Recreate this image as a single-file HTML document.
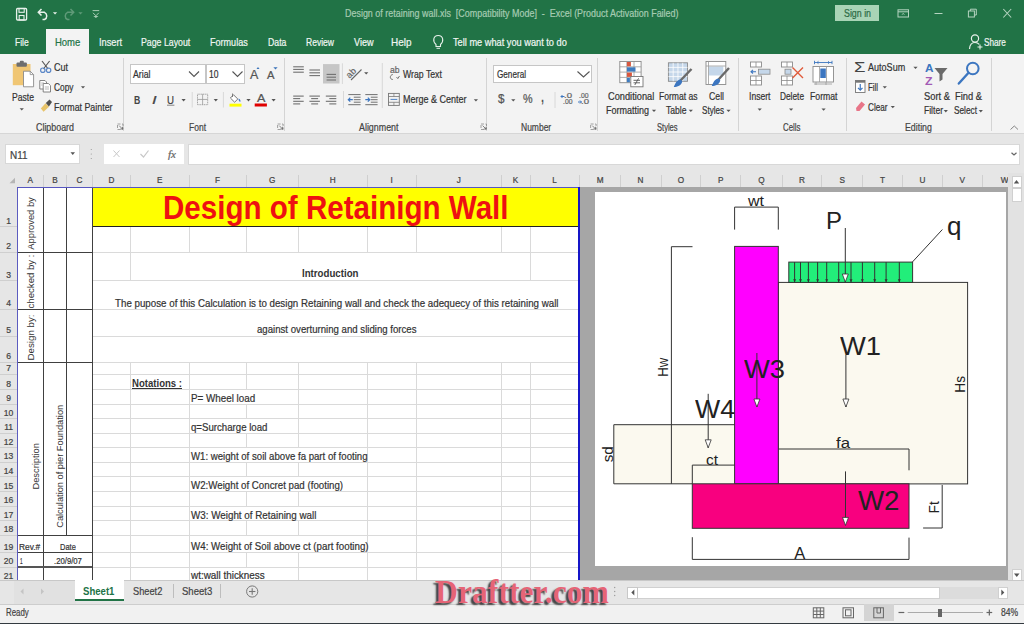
<!DOCTYPE html>
<html><head><meta charset="utf-8"><style>
html,body{margin:0;padding:0;}
body{width:1024px;height:624px;overflow:hidden;position:relative;background:#fff;font-family:"Liberation Sans",sans-serif;}
svg{position:absolute;overflow:visible;}
</style></head><body>
<div style="position:absolute;left:0.00px;top:0.00px;width:1024.00px;height:54.00px;background:#217346"></div>
<div style="position:absolute;left:45.70px;top:29.00px;width:43.50px;height:25.00px;background:#f3f3f3"></div>
<div style="position:absolute;left:344.50px;top:7.43px;font:normal normal 10.8px/12.064px 'Liberation Sans';color:#a6cbb2;white-space:pre;transform:scaleX(0.8283);transform-origin:0 0;-webkit-text-stroke:0.22px currentColor;">Design of retaining wall.xls  [Compatibility Mode]  -  Excel (Product Activation Failed)</div>
<div style="position:absolute;left:835.00px;top:5.00px;width:44.00px;height:16.00px;background:#a9d4b6"></div>
<div style="position:absolute;left:844.00px;top:6.83px;font:normal normal 10.8px/12.064px 'Liberation Sans';color:#2b6b45;white-space:pre;transform:scaleX(0.8179);transform-origin:0 0;-webkit-text-stroke:0.22px currentColor;">Sign in</div>
<div style="position:absolute;left:14.80px;top:35.83px;font:normal normal 10.8px/12.064px 'Liberation Sans';color:#f0f6f2;white-space:pre;transform:scaleX(0.7875);transform-origin:0 0;-webkit-text-stroke:0.22px currentColor;">File</div>
<div style="position:absolute;left:98.80px;top:35.83px;font:normal normal 10.8px/12.064px 'Liberation Sans';color:#f0f6f2;white-space:pre;transform:scaleX(0.8592);transform-origin:0 0;-webkit-text-stroke:0.22px currentColor;">Insert</div>
<div style="position:absolute;left:141.40px;top:35.83px;font:normal normal 10.8px/12.064px 'Liberation Sans';color:#f0f6f2;white-space:pre;transform:scaleX(0.8114);transform-origin:0 0;-webkit-text-stroke:0.22px currentColor;">Page Layout</div>
<div style="position:absolute;left:210.00px;top:35.83px;font:normal normal 10.8px/12.064px 'Liberation Sans';color:#f0f6f2;white-space:pre;transform:scaleX(0.8379);transform-origin:0 0;-webkit-text-stroke:0.22px currentColor;">Formulas</div>
<div style="position:absolute;left:267.60px;top:35.83px;font:normal normal 10.8px/12.064px 'Liberation Sans';color:#f0f6f2;white-space:pre;transform:scaleX(0.8068);transform-origin:0 0;-webkit-text-stroke:0.22px currentColor;">Data</div>
<div style="position:absolute;left:306.00px;top:35.83px;font:normal normal 10.8px/12.064px 'Liberation Sans';color:#f0f6f2;white-space:pre;transform:scaleX(0.7909);transform-origin:0 0;-webkit-text-stroke:0.22px currentColor;">Review</div>
<div style="position:absolute;left:353.50px;top:35.83px;font:normal normal 10.8px/12.064px 'Liberation Sans';color:#f0f6f2;white-space:pre;transform:scaleX(0.8403);transform-origin:0 0;-webkit-text-stroke:0.22px currentColor;">View</div>
<div style="position:absolute;left:390.60px;top:35.83px;font:normal normal 10.8px/12.064px 'Liberation Sans';color:#f0f6f2;white-space:pre;transform:scaleX(0.9187);transform-origin:0 0;-webkit-text-stroke:0.22px currentColor;">Help</div>
<div style="position:absolute;left:54.70px;top:35.83px;font:normal normal 10.8px/12.064px 'Liberation Sans';color:#217346;white-space:pre;transform:scaleX(0.8785);transform-origin:0 0;-webkit-text-stroke:0.22px currentColor;">Home</div>
<div style="position:absolute;left:452.80px;top:35.83px;font:normal normal 10.8px/12.064px 'Liberation Sans';color:#f0f6f2;white-space:pre;transform:scaleX(0.8542);transform-origin:0 0;-webkit-text-stroke:0.22px currentColor;">Tell me what you want to do</div>
<div style="position:absolute;left:984.40px;top:35.83px;font:normal normal 10.8px/12.064px 'Liberation Sans';color:#f0f6f2;white-space:pre;transform:scaleX(0.7601);transform-origin:0 0;-webkit-text-stroke:0.22px currentColor;">Share</div>
<div style="position:absolute;left:0.00px;top:54.00px;width:1024.00px;height:79.50px;background:#f3f3f3"></div>
<div style="position:absolute;left:0.00px;top:133.00px;width:1024.00px;height:1.00px;background:#d6d6d6"></div>
<div style="position:absolute;left:0.00px;top:134.00px;width:1024.00px;height:52.50px;background:#e6e6e6"></div>
<div style="position:absolute;left:123.40px;top:58.00px;width:1.00px;height:73.00px;background:#d4d4d4"></div>
<div style="position:absolute;left:283.50px;top:58.00px;width:1.00px;height:73.00px;background:#d4d4d4"></div>
<div style="position:absolute;left:486.00px;top:58.00px;width:1.00px;height:73.00px;background:#d4d4d4"></div>
<div style="position:absolute;left:597.00px;top:58.00px;width:1.00px;height:73.00px;background:#d4d4d4"></div>
<div style="position:absolute;left:738.00px;top:58.00px;width:1.00px;height:73.00px;background:#d4d4d4"></div>
<div style="position:absolute;left:845.60px;top:58.00px;width:1.00px;height:73.00px;background:#d4d4d4"></div>
<div style="position:absolute;left:991.00px;top:58.00px;width:1.00px;height:73.00px;background:#d4d4d4"></div>
<div style="position:absolute;left:36.00px;top:120.63px;font:normal normal 10.8px/12.064px 'Liberation Sans';color:#444;white-space:pre;transform:scaleX(0.8223);transform-origin:0 0;-webkit-text-stroke:0.22px currentColor;">Clipboard</div>
<div style="position:absolute;left:189.00px;top:120.63px;font:normal normal 10.8px/12.064px 'Liberation Sans';color:#444;white-space:pre;transform:scaleX(0.7869);transform-origin:0 0;-webkit-text-stroke:0.22px currentColor;">Font</div>
<div style="position:absolute;left:359.00px;top:120.63px;font:normal normal 10.8px/12.064px 'Liberation Sans';color:#444;white-space:pre;transform:scaleX(0.8227);transform-origin:0 0;-webkit-text-stroke:0.22px currentColor;">Alignment</div>
<div style="position:absolute;left:520.80px;top:120.63px;font:normal normal 10.8px/12.064px 'Liberation Sans';color:#444;white-space:pre;transform:scaleX(0.7864);transform-origin:0 0;-webkit-text-stroke:0.22px currentColor;">Number</div>
<div style="position:absolute;left:657.00px;top:120.63px;font:normal normal 10.8px/12.064px 'Liberation Sans';color:#444;white-space:pre;transform:scaleX(0.7006);transform-origin:0 0;-webkit-text-stroke:0.22px currentColor;">Styles</div>
<div style="position:absolute;left:783.00px;top:120.63px;font:normal normal 10.8px/12.064px 'Liberation Sans';color:#444;white-space:pre;transform:scaleX(0.7251);transform-origin:0 0;-webkit-text-stroke:0.22px currentColor;">Cells</div>
<div style="position:absolute;left:904.70px;top:120.63px;font:normal normal 10.8px/12.064px 'Liberation Sans';color:#444;white-space:pre;transform:scaleX(0.8148);transform-origin:0 0;-webkit-text-stroke:0.22px currentColor;">Editing</div>
<div style="position:absolute;left:54.00px;top:60.83px;font:normal normal 10.8px/12.064px 'Liberation Sans';color:#333;white-space:pre;transform:scaleX(0.8333);transform-origin:0 0;-webkit-text-stroke:0.22px currentColor;">Cut</div>
<div style="position:absolute;left:54.00px;top:81.23px;font:normal normal 10.8px/12.064px 'Liberation Sans';color:#333;white-space:pre;transform:scaleX(0.7737);transform-origin:0 0;-webkit-text-stroke:0.22px currentColor;">Copy</div>
<div style="position:absolute;left:54.00px;top:100.53px;font:normal normal 10.8px/12.064px 'Liberation Sans';color:#333;white-space:pre;transform:scaleX(0.8193);transform-origin:0 0;-webkit-text-stroke:0.22px currentColor;">Format Painter</div>
<div style="position:absolute;left:11.50px;top:90.73px;font:normal normal 10.8px/12.064px 'Liberation Sans';color:#333;white-space:pre;transform:scaleX(0.7968);transform-origin:0 0;-webkit-text-stroke:0.22px currentColor;">Paste</div>
<div style="position:absolute;left:130.00px;top:64.00px;width:76.30px;height:19.50px;background:#fff;border:1px solid #c6c6c6;box-sizing:border-box"></div>
<div style="position:absolute;left:206.00px;top:64.00px;width:38.80px;height:19.50px;background:#fff;border:1px solid #c6c6c6;box-sizing:border-box"></div>
<div style="position:absolute;left:133.00px;top:67.73px;font:normal normal 10.8px/12.064px 'Liberation Sans';color:#333;white-space:pre;transform:scaleX(0.8102);transform-origin:0 0;-webkit-text-stroke:0.22px currentColor;">Arial</div>
<div style="position:absolute;left:209.00px;top:67.73px;font:normal normal 10.8px/12.064px 'Liberation Sans';color:#333;white-space:pre;transform:scaleX(0.7910);transform-origin:0 0;-webkit-text-stroke:0.22px currentColor;">10</div>
<div style="position:absolute;left:403.00px;top:68.23px;font:normal normal 10.8px/12.064px 'Liberation Sans';color:#333;white-space:pre;transform:scaleX(0.8058);transform-origin:0 0;-webkit-text-stroke:0.22px currentColor;">Wrap Text</div>
<div style="position:absolute;left:403.00px;top:92.83px;font:normal normal 10.8px/12.064px 'Liberation Sans';color:#333;white-space:pre;transform:scaleX(0.8345);transform-origin:0 0;-webkit-text-stroke:0.22px currentColor;">Merge &amp; Center</div>
<div style="position:absolute;left:493.30px;top:64.70px;width:98.40px;height:18.70px;background:#fff;border:1px solid #c6c6c6;box-sizing:border-box"></div>
<div style="position:absolute;left:496.50px;top:68.23px;font:normal normal 10.8px/12.064px 'Liberation Sans';color:#333;white-space:pre;transform:scaleX(0.7550);transform-origin:0 0;-webkit-text-stroke:0.22px currentColor;">General</div>
<div style="position:absolute;left:607.80px;top:89.83px;font:normal normal 10.8px/12.064px 'Liberation Sans';color:#333;white-space:pre;transform:scaleX(0.8552);transform-origin:0 0;-webkit-text-stroke:0.22px currentColor;">Conditional</div>
<div style="position:absolute;left:605.70px;top:104.13px;font:normal normal 10.8px/12.064px 'Liberation Sans';color:#333;white-space:pre;transform:scaleX(0.8333);transform-origin:0 0;-webkit-text-stroke:0.22px currentColor;">Formatting</div>
<div style="position:absolute;left:659.40px;top:89.83px;font:normal normal 10.8px/12.064px 'Liberation Sans';color:#333;white-space:pre;transform:scaleX(0.7943);transform-origin:0 0;-webkit-text-stroke:0.22px currentColor;">Format as</div>
<div style="position:absolute;left:665.80px;top:104.13px;font:normal normal 10.8px/12.064px 'Liberation Sans';color:#333;white-space:pre;transform:scaleX(0.7942);transform-origin:0 0;-webkit-text-stroke:0.22px currentColor;">Table</div>
<div style="position:absolute;left:709.00px;top:89.83px;font:normal normal 10.8px/12.064px 'Liberation Sans';color:#333;white-space:pre;transform:scaleX(0.8065);transform-origin:0 0;-webkit-text-stroke:0.22px currentColor;">Cell</div>
<div style="position:absolute;left:701.60px;top:104.13px;font:normal normal 10.8px/12.064px 'Liberation Sans';color:#333;white-space:pre;transform:scaleX(0.7483);transform-origin:0 0;-webkit-text-stroke:0.22px currentColor;">Styles</div>
<div style="position:absolute;left:749.00px;top:89.83px;font:normal normal 10.8px/12.064px 'Liberation Sans';color:#333;white-space:pre;transform:scaleX(0.7962);transform-origin:0 0;-webkit-text-stroke:0.22px currentColor;">Insert</div>
<div style="position:absolute;left:779.60px;top:89.83px;font:normal normal 10.8px/12.064px 'Liberation Sans';color:#333;white-space:pre;transform:scaleX(0.7690);transform-origin:0 0;-webkit-text-stroke:0.22px currentColor;">Delete</div>
<div style="position:absolute;left:809.50px;top:89.83px;font:normal normal 10.8px/12.064px 'Liberation Sans';color:#333;white-space:pre;transform:scaleX(0.8042);transform-origin:0 0;-webkit-text-stroke:0.22px currentColor;">Format</div>
<div style="position:absolute;left:868.40px;top:61.43px;font:normal normal 10.8px/12.064px 'Liberation Sans';color:#333;white-space:pre;transform:scaleX(0.8376);transform-origin:0 0;-webkit-text-stroke:0.22px currentColor;">AutoSum</div>
<div style="position:absolute;left:868.40px;top:81.23px;font:normal normal 10.8px/12.064px 'Liberation Sans';color:#333;white-space:pre;transform:scaleX(0.7251);transform-origin:0 0;-webkit-text-stroke:0.22px currentColor;">Fill</div>
<div style="position:absolute;left:868.40px;top:100.83px;font:normal normal 10.8px/12.064px 'Liberation Sans';color:#333;white-space:pre;transform:scaleX(0.7558);transform-origin:0 0;-webkit-text-stroke:0.22px currentColor;">Clear</div>
<div style="position:absolute;left:923.60px;top:89.83px;font:normal normal 10.8px/12.064px 'Liberation Sans';color:#333;white-space:pre;transform:scaleX(0.8666);transform-origin:0 0;-webkit-text-stroke:0.22px currentColor;">Sort &amp;</div>
<div style="position:absolute;left:923.60px;top:104.13px;font:normal normal 10.8px/12.064px 'Liberation Sans';color:#333;white-space:pre;transform:scaleX(0.7919);transform-origin:0 0;-webkit-text-stroke:0.22px currentColor;">Filter</div>
<div style="position:absolute;left:955.00px;top:89.83px;font:normal normal 10.8px/12.064px 'Liberation Sans';color:#333;white-space:pre;transform:scaleX(0.8653);transform-origin:0 0;-webkit-text-stroke:0.22px currentColor;">Find &amp;</div>
<div style="position:absolute;left:953.60px;top:104.13px;font:normal normal 10.8px/12.064px 'Liberation Sans';color:#333;white-space:pre;transform:scaleX(0.7665);transform-origin:0 0;-webkit-text-stroke:0.22px currentColor;">Select</div>
<div style="position:absolute;left:4.50px;top:144.00px;width:75.00px;height:20.30px;background:#fff;border:1px solid #d8d8d8;box-sizing:border-box"></div>
<div style="position:absolute;left:9.50px;top:148.64px;font:normal normal 11px/12.287px 'Liberation Sans';color:#444;white-space:pre;transform:scaleX(0.9038);transform-origin:0 0;-webkit-text-stroke:0.22px currentColor;">N11</div>
<div style="position:absolute;left:104.00px;top:144.00px;width:80.00px;height:20.30px;background:#fff"></div>
<div style="position:absolute;left:188.00px;top:144.00px;width:831.70px;height:20.50px;background:#fff;border:1px solid #d8d8d8;box-sizing:border-box"></div>
<div style="position:absolute;left:0.00px;top:173.00px;width:1008.40px;height:13.50px;background:#e6e6e6"></div>
<div style="position:absolute;left:0.00px;top:186.50px;width:17.30px;height:394.00px;background:#e6e6e6"></div>
<div style="position:absolute;left:42.90px;top:175.00px;width:1.00px;height:11.50px;background:#cfcfcf"></div>
<div style="position:absolute;left:27.62px;top:176.18px;font:normal normal 8.2px/9.159px 'Liberation Sans';color:#444;white-space:pre;-webkit-text-stroke:0.22px currentColor;">A</div>
<div style="position:absolute;left:66.00px;top:175.00px;width:1.00px;height:11.50px;background:#cfcfcf"></div>
<div style="position:absolute;left:52.22px;top:176.18px;font:normal normal 8.2px/9.159px 'Liberation Sans';color:#444;white-space:pre;-webkit-text-stroke:0.22px currentColor;">B</div>
<div style="position:absolute;left:92.00px;top:175.00px;width:1.00px;height:11.50px;background:#cfcfcf"></div>
<div style="position:absolute;left:76.54px;top:176.18px;font:normal normal 8.2px/9.159px 'Liberation Sans';color:#444;white-space:pre;-webkit-text-stroke:0.22px currentColor;">C</div>
<div style="position:absolute;left:130.00px;top:175.00px;width:1.00px;height:11.50px;background:#cfcfcf"></div>
<div style="position:absolute;left:108.54px;top:176.18px;font:normal normal 8.2px/9.159px 'Liberation Sans';color:#444;white-space:pre;-webkit-text-stroke:0.22px currentColor;">D</div>
<div style="position:absolute;left:188.50px;top:175.00px;width:1.00px;height:11.50px;background:#cfcfcf"></div>
<div style="position:absolute;left:157.02px;top:176.18px;font:normal normal 8.2px/9.159px 'Liberation Sans';color:#444;white-space:pre;-webkit-text-stroke:0.22px currentColor;">E</div>
<div style="position:absolute;left:245.50px;top:175.00px;width:1.00px;height:11.50px;background:#cfcfcf"></div>
<div style="position:absolute;left:215.00px;top:176.18px;font:normal normal 8.2px/9.159px 'Liberation Sans';color:#444;white-space:pre;-webkit-text-stroke:0.22px currentColor;">F</div>
<div style="position:absolute;left:298.10px;top:175.00px;width:1.00px;height:11.50px;background:#cfcfcf"></div>
<div style="position:absolute;left:269.12px;top:176.18px;font:normal normal 8.2px/9.159px 'Liberation Sans';color:#444;white-space:pre;-webkit-text-stroke:0.22px currentColor;">G</div>
<div style="position:absolute;left:366.50px;top:175.00px;width:1.00px;height:11.50px;background:#cfcfcf"></div>
<div style="position:absolute;left:329.84px;top:176.18px;font:normal normal 8.2px/9.159px 'Liberation Sans';color:#444;white-space:pre;-webkit-text-stroke:0.22px currentColor;">H</div>
<div style="position:absolute;left:416.00px;top:175.00px;width:1.00px;height:11.50px;background:#cfcfcf"></div>
<div style="position:absolute;left:390.61px;top:176.18px;font:normal normal 8.2px/9.159px 'Liberation Sans';color:#444;white-space:pre;-webkit-text-stroke:0.22px currentColor;">I</div>
<div style="position:absolute;left:500.50px;top:175.00px;width:1.00px;height:11.50px;background:#cfcfcf"></div>
<div style="position:absolute;left:456.70px;top:176.18px;font:normal normal 8.2px/9.159px 'Liberation Sans';color:#444;white-space:pre;-webkit-text-stroke:0.22px currentColor;">J</div>
<div style="position:absolute;left:529.50px;top:175.00px;width:1.00px;height:11.50px;background:#cfcfcf"></div>
<div style="position:absolute;left:512.77px;top:176.18px;font:normal normal 8.2px/9.159px 'Liberation Sans';color:#444;white-space:pre;-webkit-text-stroke:0.22px currentColor;">K</div>
<div style="position:absolute;left:578.50px;top:175.00px;width:1.00px;height:11.50px;background:#cfcfcf"></div>
<div style="position:absolute;left:552.22px;top:176.18px;font:normal normal 8.2px/9.159px 'Liberation Sans';color:#444;white-space:pre;-webkit-text-stroke:0.22px currentColor;">L</div>
<div style="position:absolute;left:619.50px;top:175.00px;width:1.00px;height:11.50px;background:#cfcfcf"></div>
<div style="position:absolute;left:596.84px;top:176.18px;font:normal normal 8.2px/9.159px 'Liberation Sans';color:#444;white-space:pre;-webkit-text-stroke:0.22px currentColor;">M</div>
<div style="position:absolute;left:660.50px;top:175.00px;width:1.00px;height:11.50px;background:#cfcfcf"></div>
<div style="position:absolute;left:637.54px;top:176.18px;font:normal normal 8.2px/9.159px 'Liberation Sans';color:#444;white-space:pre;-webkit-text-stroke:0.22px currentColor;">N</div>
<div style="position:absolute;left:700.30px;top:175.00px;width:1.00px;height:11.50px;background:#cfcfcf"></div>
<div style="position:absolute;left:677.72px;top:176.18px;font:normal normal 8.2px/9.159px 'Liberation Sans';color:#444;white-space:pre;-webkit-text-stroke:0.22px currentColor;">O</div>
<div style="position:absolute;left:740.20px;top:175.00px;width:1.00px;height:11.50px;background:#cfcfcf"></div>
<div style="position:absolute;left:718.02px;top:176.18px;font:normal normal 8.2px/9.159px 'Liberation Sans';color:#444;white-space:pre;-webkit-text-stroke:0.22px currentColor;">P</div>
<div style="position:absolute;left:781.50px;top:175.00px;width:1.00px;height:11.50px;background:#cfcfcf"></div>
<div style="position:absolute;left:758.17px;top:176.18px;font:normal normal 8.2px/9.159px 'Liberation Sans';color:#444;white-space:pre;-webkit-text-stroke:0.22px currentColor;">Q</div>
<div style="position:absolute;left:821.30px;top:175.00px;width:1.00px;height:11.50px;background:#cfcfcf"></div>
<div style="position:absolute;left:798.94px;top:176.18px;font:normal normal 8.2px/9.159px 'Liberation Sans';color:#444;white-space:pre;-webkit-text-stroke:0.22px currentColor;">R</div>
<div style="position:absolute;left:862.10px;top:175.00px;width:1.00px;height:11.50px;background:#cfcfcf"></div>
<div style="position:absolute;left:839.47px;top:176.18px;font:normal normal 8.2px/9.159px 'Liberation Sans';color:#444;white-space:pre;-webkit-text-stroke:0.22px currentColor;">S</div>
<div style="position:absolute;left:902.00px;top:175.00px;width:1.00px;height:11.50px;background:#cfcfcf"></div>
<div style="position:absolute;left:880.05px;top:176.18px;font:normal normal 8.2px/9.159px 'Liberation Sans';color:#444;white-space:pre;-webkit-text-stroke:0.22px currentColor;">T</div>
<div style="position:absolute;left:941.90px;top:175.00px;width:1.00px;height:11.50px;background:#cfcfcf"></div>
<div style="position:absolute;left:919.49px;top:176.18px;font:normal normal 8.2px/9.159px 'Liberation Sans';color:#444;white-space:pre;-webkit-text-stroke:0.22px currentColor;">U</div>
<div style="position:absolute;left:981.80px;top:175.00px;width:1.00px;height:11.50px;background:#cfcfcf"></div>
<div style="position:absolute;left:959.62px;top:176.18px;font:normal normal 8.2px/9.159px 'Liberation Sans';color:#444;white-space:pre;-webkit-text-stroke:0.22px currentColor;">V</div>
<div style="position:absolute;left:1021.50px;top:175.00px;width:1.00px;height:11.50px;background:#cfcfcf"></div>
<div style="position:absolute;left:1000.64px;top:176.18px;font:normal normal 8.2px/9.159px 'Liberation Sans';color:#444;white-space:pre;-webkit-text-stroke:0.22px currentColor;">W</div>
<div style="position:absolute;left:17.30px;top:186.50px;width:563.20px;height:394.00px;background:#fff"></div>
<div style="position:absolute;left:0.00px;top:226.30px;width:17.30px;height:1.00px;background:#cfcfcf"></div>
<div style="position:absolute;left:6.21px;top:216.82px;font:normal normal 8.6px/9.606px 'Liberation Sans';color:#444;white-space:pre;-webkit-text-stroke:0.22px currentColor;">1</div>
<div style="position:absolute;left:0.00px;top:251.50px;width:17.30px;height:1.00px;background:#cfcfcf"></div>
<div style="position:absolute;left:6.21px;top:242.02px;font:normal normal 8.6px/9.606px 'Liberation Sans';color:#444;white-space:pre;-webkit-text-stroke:0.22px currentColor;">2</div>
<div style="position:absolute;left:0.00px;top:280.00px;width:17.30px;height:1.00px;background:#cfcfcf"></div>
<div style="position:absolute;left:6.21px;top:270.52px;font:normal normal 8.6px/9.606px 'Liberation Sans';color:#444;white-space:pre;-webkit-text-stroke:0.22px currentColor;">3</div>
<div style="position:absolute;left:0.00px;top:308.70px;width:17.30px;height:1.00px;background:#cfcfcf"></div>
<div style="position:absolute;left:6.21px;top:299.22px;font:normal normal 8.6px/9.606px 'Liberation Sans';color:#444;white-space:pre;-webkit-text-stroke:0.22px currentColor;">4</div>
<div style="position:absolute;left:0.00px;top:335.50px;width:17.30px;height:1.00px;background:#cfcfcf"></div>
<div style="position:absolute;left:6.21px;top:326.02px;font:normal normal 8.6px/9.606px 'Liberation Sans';color:#444;white-space:pre;-webkit-text-stroke:0.22px currentColor;">5</div>
<div style="position:absolute;left:0.00px;top:361.50px;width:17.30px;height:1.00px;background:#cfcfcf"></div>
<div style="position:absolute;left:6.21px;top:352.02px;font:normal normal 8.6px/9.606px 'Liberation Sans';color:#444;white-space:pre;-webkit-text-stroke:0.22px currentColor;">6</div>
<div style="position:absolute;left:0.00px;top:373.80px;width:17.30px;height:1.00px;background:#cfcfcf"></div>
<div style="position:absolute;left:6.21px;top:364.32px;font:normal normal 8.6px/9.606px 'Liberation Sans';color:#444;white-space:pre;-webkit-text-stroke:0.22px currentColor;">7</div>
<div style="position:absolute;left:0.00px;top:389.00px;width:17.30px;height:1.00px;background:#cfcfcf"></div>
<div style="position:absolute;left:6.21px;top:379.52px;font:normal normal 8.6px/9.606px 'Liberation Sans';color:#444;white-space:pre;-webkit-text-stroke:0.22px currentColor;">8</div>
<div style="position:absolute;left:0.00px;top:403.57px;width:17.30px;height:1.00px;background:#cfcfcf"></div>
<div style="position:absolute;left:6.21px;top:394.09px;font:normal normal 8.6px/9.606px 'Liberation Sans';color:#444;white-space:pre;-webkit-text-stroke:0.22px currentColor;">9</div>
<div style="position:absolute;left:0.00px;top:418.14px;width:17.30px;height:1.00px;background:#cfcfcf"></div>
<div style="position:absolute;left:3.82px;top:408.66px;font:normal normal 8.6px/9.606px 'Liberation Sans';color:#444;white-space:pre;-webkit-text-stroke:0.22px currentColor;">10</div>
<div style="position:absolute;left:0.00px;top:432.71px;width:17.30px;height:1.00px;background:#cfcfcf"></div>
<div style="position:absolute;left:4.14px;top:423.23px;font:normal normal 8.6px/9.606px 'Liberation Sans';color:#444;white-space:pre;-webkit-text-stroke:0.22px currentColor;">11</div>
<div style="position:absolute;left:0.00px;top:447.28px;width:17.30px;height:1.00px;background:#cfcfcf"></div>
<div style="position:absolute;left:3.82px;top:437.80px;font:normal normal 8.6px/9.606px 'Liberation Sans';color:#444;white-space:pre;-webkit-text-stroke:0.22px currentColor;">12</div>
<div style="position:absolute;left:0.00px;top:461.85px;width:17.30px;height:1.00px;background:#cfcfcf"></div>
<div style="position:absolute;left:3.82px;top:452.37px;font:normal normal 8.6px/9.606px 'Liberation Sans';color:#444;white-space:pre;-webkit-text-stroke:0.22px currentColor;">13</div>
<div style="position:absolute;left:0.00px;top:476.42px;width:17.30px;height:1.00px;background:#cfcfcf"></div>
<div style="position:absolute;left:3.82px;top:466.94px;font:normal normal 8.6px/9.606px 'Liberation Sans';color:#444;white-space:pre;-webkit-text-stroke:0.22px currentColor;">14</div>
<div style="position:absolute;left:0.00px;top:490.99px;width:17.30px;height:1.00px;background:#cfcfcf"></div>
<div style="position:absolute;left:3.82px;top:481.51px;font:normal normal 8.6px/9.606px 'Liberation Sans';color:#444;white-space:pre;-webkit-text-stroke:0.22px currentColor;">15</div>
<div style="position:absolute;left:0.00px;top:505.56px;width:17.30px;height:1.00px;background:#cfcfcf"></div>
<div style="position:absolute;left:3.82px;top:496.08px;font:normal normal 8.6px/9.606px 'Liberation Sans';color:#444;white-space:pre;-webkit-text-stroke:0.22px currentColor;">16</div>
<div style="position:absolute;left:0.00px;top:520.13px;width:17.30px;height:1.00px;background:#cfcfcf"></div>
<div style="position:absolute;left:3.82px;top:510.65px;font:normal normal 8.6px/9.606px 'Liberation Sans';color:#444;white-space:pre;-webkit-text-stroke:0.22px currentColor;">17</div>
<div style="position:absolute;left:0.00px;top:534.70px;width:17.30px;height:1.00px;background:#cfcfcf"></div>
<div style="position:absolute;left:3.82px;top:525.22px;font:normal normal 8.6px/9.606px 'Liberation Sans';color:#444;white-space:pre;-webkit-text-stroke:0.22px currentColor;">18</div>
<div style="position:absolute;left:0.00px;top:552.10px;width:17.30px;height:1.00px;background:#cfcfcf"></div>
<div style="position:absolute;left:3.82px;top:542.62px;font:normal normal 8.6px/9.606px 'Liberation Sans';color:#444;white-space:pre;-webkit-text-stroke:0.22px currentColor;">19</div>
<div style="position:absolute;left:0.00px;top:566.50px;width:17.30px;height:1.00px;background:#cfcfcf"></div>
<div style="position:absolute;left:3.82px;top:557.02px;font:normal normal 8.6px/9.606px 'Liberation Sans';color:#444;white-space:pre;-webkit-text-stroke:0.22px currentColor;">20</div>
<div style="position:absolute;left:0.00px;top:581.00px;width:17.30px;height:1.00px;background:#cfcfcf"></div>
<div style="position:absolute;left:3.82px;top:571.72px;font:normal normal 8.6px/9.606px 'Liberation Sans';color:#444;white-space:pre;-webkit-text-stroke:0.22px currentColor;">21</div>
<div style="position:absolute;left:16.80px;top:186.50px;width:0.80px;height:394.00px;background:#cfcfcf"></div>
<div style="position:absolute;left:130.00px;top:226.80px;width:1.00px;height:25.20px;background:#dadada"></div>
<div style="position:absolute;left:188.50px;top:226.80px;width:1.00px;height:25.20px;background:#dadada"></div>
<div style="position:absolute;left:245.50px;top:226.80px;width:1.00px;height:25.20px;background:#dadada"></div>
<div style="position:absolute;left:298.10px;top:226.80px;width:1.00px;height:25.20px;background:#dadada"></div>
<div style="position:absolute;left:366.50px;top:226.80px;width:1.00px;height:25.20px;background:#dadada"></div>
<div style="position:absolute;left:416.00px;top:226.80px;width:1.00px;height:25.20px;background:#dadada"></div>
<div style="position:absolute;left:500.50px;top:226.80px;width:1.00px;height:25.20px;background:#dadada"></div>
<div style="position:absolute;left:529.50px;top:226.80px;width:1.00px;height:25.20px;background:#dadada"></div>
<div style="position:absolute;left:92.50px;top:251.50px;width:486.50px;height:1.00px;background:#dadada"></div>
<div style="position:absolute;left:130.00px;top:252.00px;width:1.00px;height:28.50px;background:#dadada"></div>
<div style="position:absolute;left:529.50px;top:252.00px;width:1.00px;height:28.50px;background:#dadada"></div>
<div style="position:absolute;left:92.50px;top:280.00px;width:486.50px;height:1.00px;background:#dadada"></div>
<div style="position:absolute;left:92.50px;top:308.70px;width:486.50px;height:1.00px;background:#dadada"></div>
<div style="position:absolute;left:92.50px;top:335.50px;width:486.50px;height:1.00px;background:#dadada"></div>
<div style="position:absolute;left:92.50px;top:361.50px;width:486.50px;height:1.00px;background:#dadada"></div>
<div style="position:absolute;left:92.50px;top:373.80px;width:486.50px;height:1.00px;background:#dadada"></div>
<div style="position:absolute;left:92.50px;top:389.00px;width:486.50px;height:1.00px;background:#dadada"></div>
<div style="position:absolute;left:92.50px;top:403.57px;width:486.50px;height:1.00px;background:#dadada"></div>
<div style="position:absolute;left:92.50px;top:418.14px;width:486.50px;height:1.00px;background:#dadada"></div>
<div style="position:absolute;left:92.50px;top:432.71px;width:486.50px;height:1.00px;background:#dadada"></div>
<div style="position:absolute;left:92.50px;top:447.28px;width:486.50px;height:1.00px;background:#dadada"></div>
<div style="position:absolute;left:92.50px;top:461.85px;width:486.50px;height:1.00px;background:#dadada"></div>
<div style="position:absolute;left:92.50px;top:476.42px;width:486.50px;height:1.00px;background:#dadada"></div>
<div style="position:absolute;left:92.50px;top:490.99px;width:486.50px;height:1.00px;background:#dadada"></div>
<div style="position:absolute;left:92.50px;top:505.56px;width:486.50px;height:1.00px;background:#dadada"></div>
<div style="position:absolute;left:92.50px;top:520.13px;width:486.50px;height:1.00px;background:#dadada"></div>
<div style="position:absolute;left:92.50px;top:534.70px;width:486.50px;height:1.00px;background:#dadada"></div>
<div style="position:absolute;left:92.50px;top:552.10px;width:486.50px;height:1.00px;background:#dadada"></div>
<div style="position:absolute;left:92.50px;top:566.50px;width:486.50px;height:1.00px;background:#dadada"></div>
<div style="position:absolute;left:92.50px;top:581.00px;width:486.50px;height:1.00px;background:#dadada"></div>
<div style="position:absolute;left:130.00px;top:362.00px;width:1.00px;height:12.30px;background:#dadada"></div>
<div style="position:absolute;left:188.50px;top:362.00px;width:1.00px;height:12.30px;background:#dadada"></div>
<div style="position:absolute;left:245.50px;top:362.00px;width:1.00px;height:12.30px;background:#dadada"></div>
<div style="position:absolute;left:298.10px;top:362.00px;width:1.00px;height:12.30px;background:#dadada"></div>
<div style="position:absolute;left:366.50px;top:362.00px;width:1.00px;height:12.30px;background:#dadada"></div>
<div style="position:absolute;left:416.00px;top:362.00px;width:1.00px;height:12.30px;background:#dadada"></div>
<div style="position:absolute;left:500.50px;top:362.00px;width:1.00px;height:12.30px;background:#dadada"></div>
<div style="position:absolute;left:529.50px;top:362.00px;width:1.00px;height:12.30px;background:#dadada"></div>
<div style="position:absolute;left:130.00px;top:374.30px;width:1.00px;height:15.20px;background:#dadada"></div>
<div style="position:absolute;left:188.50px;top:374.30px;width:1.00px;height:15.20px;background:#dadada"></div>
<div style="position:absolute;left:245.50px;top:374.30px;width:1.00px;height:15.20px;background:#dadada"></div>
<div style="position:absolute;left:298.10px;top:374.30px;width:1.00px;height:15.20px;background:#dadada"></div>
<div style="position:absolute;left:366.50px;top:374.30px;width:1.00px;height:15.20px;background:#dadada"></div>
<div style="position:absolute;left:416.00px;top:374.30px;width:1.00px;height:15.20px;background:#dadada"></div>
<div style="position:absolute;left:500.50px;top:374.30px;width:1.00px;height:15.20px;background:#dadada"></div>
<div style="position:absolute;left:529.50px;top:374.30px;width:1.00px;height:15.20px;background:#dadada"></div>
<div style="position:absolute;left:130.00px;top:389.50px;width:1.00px;height:14.57px;background:#dadada"></div>
<div style="position:absolute;left:188.50px;top:389.50px;width:1.00px;height:14.57px;background:#dadada"></div>
<div style="position:absolute;left:298.10px;top:389.50px;width:1.00px;height:14.57px;background:#dadada"></div>
<div style="position:absolute;left:366.50px;top:389.50px;width:1.00px;height:14.57px;background:#dadada"></div>
<div style="position:absolute;left:416.00px;top:389.50px;width:1.00px;height:14.57px;background:#dadada"></div>
<div style="position:absolute;left:500.50px;top:389.50px;width:1.00px;height:14.57px;background:#dadada"></div>
<div style="position:absolute;left:529.50px;top:389.50px;width:1.00px;height:14.57px;background:#dadada"></div>
<div style="position:absolute;left:130.00px;top:404.07px;width:1.00px;height:14.57px;background:#dadada"></div>
<div style="position:absolute;left:188.50px;top:404.07px;width:1.00px;height:14.57px;background:#dadada"></div>
<div style="position:absolute;left:245.50px;top:404.07px;width:1.00px;height:14.57px;background:#dadada"></div>
<div style="position:absolute;left:298.10px;top:404.07px;width:1.00px;height:14.57px;background:#dadada"></div>
<div style="position:absolute;left:366.50px;top:404.07px;width:1.00px;height:14.57px;background:#dadada"></div>
<div style="position:absolute;left:416.00px;top:404.07px;width:1.00px;height:14.57px;background:#dadada"></div>
<div style="position:absolute;left:500.50px;top:404.07px;width:1.00px;height:14.57px;background:#dadada"></div>
<div style="position:absolute;left:529.50px;top:404.07px;width:1.00px;height:14.57px;background:#dadada"></div>
<div style="position:absolute;left:130.00px;top:418.64px;width:1.00px;height:14.57px;background:#dadada"></div>
<div style="position:absolute;left:188.50px;top:418.64px;width:1.00px;height:14.57px;background:#dadada"></div>
<div style="position:absolute;left:298.10px;top:418.64px;width:1.00px;height:14.57px;background:#dadada"></div>
<div style="position:absolute;left:366.50px;top:418.64px;width:1.00px;height:14.57px;background:#dadada"></div>
<div style="position:absolute;left:416.00px;top:418.64px;width:1.00px;height:14.57px;background:#dadada"></div>
<div style="position:absolute;left:500.50px;top:418.64px;width:1.00px;height:14.57px;background:#dadada"></div>
<div style="position:absolute;left:529.50px;top:418.64px;width:1.00px;height:14.57px;background:#dadada"></div>
<div style="position:absolute;left:130.00px;top:433.21px;width:1.00px;height:14.57px;background:#dadada"></div>
<div style="position:absolute;left:188.50px;top:433.21px;width:1.00px;height:14.57px;background:#dadada"></div>
<div style="position:absolute;left:245.50px;top:433.21px;width:1.00px;height:14.57px;background:#dadada"></div>
<div style="position:absolute;left:298.10px;top:433.21px;width:1.00px;height:14.57px;background:#dadada"></div>
<div style="position:absolute;left:366.50px;top:433.21px;width:1.00px;height:14.57px;background:#dadada"></div>
<div style="position:absolute;left:416.00px;top:433.21px;width:1.00px;height:14.57px;background:#dadada"></div>
<div style="position:absolute;left:500.50px;top:433.21px;width:1.00px;height:14.57px;background:#dadada"></div>
<div style="position:absolute;left:529.50px;top:433.21px;width:1.00px;height:14.57px;background:#dadada"></div>
<div style="position:absolute;left:130.00px;top:447.78px;width:1.00px;height:14.57px;background:#dadada"></div>
<div style="position:absolute;left:188.50px;top:447.78px;width:1.00px;height:14.57px;background:#dadada"></div>
<div style="position:absolute;left:366.50px;top:447.78px;width:1.00px;height:14.57px;background:#dadada"></div>
<div style="position:absolute;left:416.00px;top:447.78px;width:1.00px;height:14.57px;background:#dadada"></div>
<div style="position:absolute;left:500.50px;top:447.78px;width:1.00px;height:14.57px;background:#dadada"></div>
<div style="position:absolute;left:529.50px;top:447.78px;width:1.00px;height:14.57px;background:#dadada"></div>
<div style="position:absolute;left:130.00px;top:462.35px;width:1.00px;height:14.57px;background:#dadada"></div>
<div style="position:absolute;left:188.50px;top:462.35px;width:1.00px;height:14.57px;background:#dadada"></div>
<div style="position:absolute;left:245.50px;top:462.35px;width:1.00px;height:14.57px;background:#dadada"></div>
<div style="position:absolute;left:298.10px;top:462.35px;width:1.00px;height:14.57px;background:#dadada"></div>
<div style="position:absolute;left:366.50px;top:462.35px;width:1.00px;height:14.57px;background:#dadada"></div>
<div style="position:absolute;left:416.00px;top:462.35px;width:1.00px;height:14.57px;background:#dadada"></div>
<div style="position:absolute;left:500.50px;top:462.35px;width:1.00px;height:14.57px;background:#dadada"></div>
<div style="position:absolute;left:529.50px;top:462.35px;width:1.00px;height:14.57px;background:#dadada"></div>
<div style="position:absolute;left:130.00px;top:476.92px;width:1.00px;height:14.57px;background:#dadada"></div>
<div style="position:absolute;left:188.50px;top:476.92px;width:1.00px;height:14.57px;background:#dadada"></div>
<div style="position:absolute;left:366.50px;top:476.92px;width:1.00px;height:14.57px;background:#dadada"></div>
<div style="position:absolute;left:416.00px;top:476.92px;width:1.00px;height:14.57px;background:#dadada"></div>
<div style="position:absolute;left:500.50px;top:476.92px;width:1.00px;height:14.57px;background:#dadada"></div>
<div style="position:absolute;left:529.50px;top:476.92px;width:1.00px;height:14.57px;background:#dadada"></div>
<div style="position:absolute;left:130.00px;top:491.49px;width:1.00px;height:14.57px;background:#dadada"></div>
<div style="position:absolute;left:188.50px;top:491.49px;width:1.00px;height:14.57px;background:#dadada"></div>
<div style="position:absolute;left:245.50px;top:491.49px;width:1.00px;height:14.57px;background:#dadada"></div>
<div style="position:absolute;left:298.10px;top:491.49px;width:1.00px;height:14.57px;background:#dadada"></div>
<div style="position:absolute;left:366.50px;top:491.49px;width:1.00px;height:14.57px;background:#dadada"></div>
<div style="position:absolute;left:416.00px;top:491.49px;width:1.00px;height:14.57px;background:#dadada"></div>
<div style="position:absolute;left:500.50px;top:491.49px;width:1.00px;height:14.57px;background:#dadada"></div>
<div style="position:absolute;left:529.50px;top:491.49px;width:1.00px;height:14.57px;background:#dadada"></div>
<div style="position:absolute;left:130.00px;top:506.06px;width:1.00px;height:14.57px;background:#dadada"></div>
<div style="position:absolute;left:188.50px;top:506.06px;width:1.00px;height:14.57px;background:#dadada"></div>
<div style="position:absolute;left:366.50px;top:506.06px;width:1.00px;height:14.57px;background:#dadada"></div>
<div style="position:absolute;left:416.00px;top:506.06px;width:1.00px;height:14.57px;background:#dadada"></div>
<div style="position:absolute;left:500.50px;top:506.06px;width:1.00px;height:14.57px;background:#dadada"></div>
<div style="position:absolute;left:529.50px;top:506.06px;width:1.00px;height:14.57px;background:#dadada"></div>
<div style="position:absolute;left:130.00px;top:520.63px;width:1.00px;height:14.57px;background:#dadada"></div>
<div style="position:absolute;left:188.50px;top:520.63px;width:1.00px;height:14.57px;background:#dadada"></div>
<div style="position:absolute;left:245.50px;top:520.63px;width:1.00px;height:14.57px;background:#dadada"></div>
<div style="position:absolute;left:298.10px;top:520.63px;width:1.00px;height:14.57px;background:#dadada"></div>
<div style="position:absolute;left:366.50px;top:520.63px;width:1.00px;height:14.57px;background:#dadada"></div>
<div style="position:absolute;left:416.00px;top:520.63px;width:1.00px;height:14.57px;background:#dadada"></div>
<div style="position:absolute;left:500.50px;top:520.63px;width:1.00px;height:14.57px;background:#dadada"></div>
<div style="position:absolute;left:529.50px;top:520.63px;width:1.00px;height:14.57px;background:#dadada"></div>
<div style="position:absolute;left:130.00px;top:535.20px;width:1.00px;height:17.40px;background:#dadada"></div>
<div style="position:absolute;left:188.50px;top:535.20px;width:1.00px;height:17.40px;background:#dadada"></div>
<div style="position:absolute;left:366.50px;top:535.20px;width:1.00px;height:17.40px;background:#dadada"></div>
<div style="position:absolute;left:416.00px;top:535.20px;width:1.00px;height:17.40px;background:#dadada"></div>
<div style="position:absolute;left:500.50px;top:535.20px;width:1.00px;height:17.40px;background:#dadada"></div>
<div style="position:absolute;left:529.50px;top:535.20px;width:1.00px;height:17.40px;background:#dadada"></div>
<div style="position:absolute;left:130.00px;top:552.60px;width:1.00px;height:14.40px;background:#dadada"></div>
<div style="position:absolute;left:188.50px;top:552.60px;width:1.00px;height:14.40px;background:#dadada"></div>
<div style="position:absolute;left:245.50px;top:552.60px;width:1.00px;height:14.40px;background:#dadada"></div>
<div style="position:absolute;left:298.10px;top:552.60px;width:1.00px;height:14.40px;background:#dadada"></div>
<div style="position:absolute;left:366.50px;top:552.60px;width:1.00px;height:14.40px;background:#dadada"></div>
<div style="position:absolute;left:416.00px;top:552.60px;width:1.00px;height:14.40px;background:#dadada"></div>
<div style="position:absolute;left:500.50px;top:552.60px;width:1.00px;height:14.40px;background:#dadada"></div>
<div style="position:absolute;left:529.50px;top:552.60px;width:1.00px;height:14.40px;background:#dadada"></div>
<div style="position:absolute;left:130.00px;top:567.00px;width:1.00px;height:13.30px;background:#dadada"></div>
<div style="position:absolute;left:188.50px;top:567.00px;width:1.00px;height:13.30px;background:#dadada"></div>
<div style="position:absolute;left:298.10px;top:567.00px;width:1.00px;height:13.30px;background:#dadada"></div>
<div style="position:absolute;left:366.50px;top:567.00px;width:1.00px;height:13.30px;background:#dadada"></div>
<div style="position:absolute;left:416.00px;top:567.00px;width:1.00px;height:13.30px;background:#dadada"></div>
<div style="position:absolute;left:500.50px;top:567.00px;width:1.00px;height:13.30px;background:#dadada"></div>
<div style="position:absolute;left:529.50px;top:567.00px;width:1.00px;height:13.30px;background:#dadada"></div>
<div style="position:absolute;left:92.50px;top:187.50px;width:486.00px;height:39.30px;background:#ffff00"></div>
<div style="position:absolute;left:92.50px;top:226.20px;width:486.50px;height:1.20px;background:#222"></div>
<div style="position:absolute;left:162.90px;top:188.13px;font:normal bold 34px/37.978px 'Liberation Sans';color:#ee1111;white-space:pre;transform:scaleX(0.8696);transform-origin:0 0;">Design of Retainign Wall</div>
<div style="position:absolute;left:301.50px;top:267.19px;font:normal bold 11.5px/12.845px 'Liberation Sans';color:#333;white-space:pre;transform:scaleX(0.8424);transform-origin:0 0;">Introduction</div>
<div style="position:absolute;left:114.50px;top:296.89px;font:normal normal 11.5px/12.845px 'Liberation Sans';color:#333;white-space:pre;transform:scaleX(0.8481);transform-origin:0 0;-webkit-text-stroke:0.22px currentColor;">The pupose of this Calculation is to design Retaining wall and check the adequecy of this retaining wall</div>
<div style="position:absolute;left:256.60px;top:322.99px;font:normal normal 11.5px/12.845px 'Liberation Sans';color:#333;white-space:pre;transform:scaleX(0.8373);transform-origin:0 0;-webkit-text-stroke:0.22px currentColor;">against overturning and sliding forces</div>
<div style="position:absolute;left:132.20px;top:377.19px;font:normal bold 11.5px/12.845px 'Liberation Sans';color:#333;white-space:pre;transform:scaleX(0.8326);transform-origin:0 0;text-decoration:underline;">Notations :</div>
<div style="position:absolute;left:190.60px;top:392.06px;font:normal normal 11.5px/12.845px 'Liberation Sans';color:#333;white-space:pre;transform:scaleX(0.8547);transform-origin:0 0;-webkit-text-stroke:0.22px currentColor;">P= Wheel load</div>
<div style="position:absolute;left:190.60px;top:421.20px;font:normal normal 11.5px/12.845px 'Liberation Sans';color:#333;white-space:pre;transform:scaleX(0.8386);transform-origin:0 0;-webkit-text-stroke:0.22px currentColor;">q=Surcharge load</div>
<div style="position:absolute;left:190.60px;top:450.34px;font:normal normal 11.5px/12.845px 'Liberation Sans';color:#333;white-space:pre;transform:scaleX(0.8367);transform-origin:0 0;-webkit-text-stroke:0.22px currentColor;">W1: weight of soil above fa part of footing</div>
<div style="position:absolute;left:190.60px;top:479.48px;font:normal normal 11.5px/12.845px 'Liberation Sans';color:#333;white-space:pre;transform:scaleX(0.8448);transform-origin:0 0;-webkit-text-stroke:0.22px currentColor;">W2:Weight of Concret pad (footing)</div>
<div style="position:absolute;left:190.60px;top:508.62px;font:normal normal 11.5px/12.845px 'Liberation Sans';color:#333;white-space:pre;transform:scaleX(0.8542);transform-origin:0 0;-webkit-text-stroke:0.22px currentColor;">W3: Weight of Retaining wall</div>
<div style="position:absolute;left:190.60px;top:539.79px;font:normal normal 11.5px/12.845px 'Liberation Sans';color:#333;white-space:pre;transform:scaleX(0.8480);transform-origin:0 0;-webkit-text-stroke:0.22px currentColor;">W4: Weight of Soil above ct (part footing)</div>
<div style="position:absolute;left:190.60px;top:569.49px;font:normal normal 11.5px/12.845px 'Liberation Sans';color:#333;white-space:pre;transform:scaleX(0.8606);transform-origin:0 0;-webkit-text-stroke:0.22px currentColor;">wt:wall thickness</div>
<div style="position:absolute;left:43.00px;top:186.50px;width:1.00px;height:393.80px;background:#404040"></div>
<div style="position:absolute;left:92.00px;top:186.50px;width:1.00px;height:393.80px;background:#404040"></div>
<div style="position:absolute;left:66.00px;top:186.50px;width:1.00px;height:348.70px;background:#404040"></div>
<div style="position:absolute;left:17.30px;top:252.00px;width:75.70px;height:1.00px;background:#404040"></div>
<div style="position:absolute;left:17.30px;top:309.00px;width:75.70px;height:1.00px;background:#404040"></div>
<div style="position:absolute;left:17.30px;top:362.00px;width:75.70px;height:1.00px;background:#404040"></div>
<div style="position:absolute;left:17.30px;top:535.00px;width:75.70px;height:1.00px;background:#404040"></div>
<div style="position:absolute;left:17.30px;top:552.00px;width:75.70px;height:1.00px;background:#404040"></div>
<div style="position:absolute;left:17.30px;top:566.15px;width:75.20px;height:1.70px;background:#555"></div>
<div style="position:absolute;left:3.50px;top:217.53px;width:55.01px;font:normal 9.8px/10.947px 'Liberation Sans';color:#333;white-space:nowrap;text-align:center;transform:rotate(-90deg) scaleX(0.9544);transform-origin:50% 50%;">Approved by</div>
<div style="position:absolute;left:3.50px;top:275.53px;width:55.00px;font:normal 9.8px/10.947px 'Liberation Sans';color:#333;white-space:nowrap;text-align:center;transform:rotate(-90deg) scaleX(0.9818);transform-origin:50% 50%;">checked by :</div>
<div style="position:absolute;left:7.86px;top:331.53px;width:46.29px;font:normal 9.8px/10.947px 'Liberation Sans';color:#333;white-space:nowrap;text-align:center;transform:rotate(-90deg) scaleX(0.9938);transform-origin:50% 50%;">Design by:</div>
<div style="position:absolute;left:13.04px;top:460.69px;width:47.52px;font:normal 9.5px/10.611px 'Liberation Sans';color:#333;white-space:nowrap;text-align:center;transform:rotate(-90deg) scaleX(0.9786);transform-origin:50% 50%;">Description</div>
<div style="position:absolute;left:-3.11px;top:460.69px;width:126.22px;font:normal 9.5px/10.611px 'Liberation Sans';color:#333;white-space:nowrap;text-align:center;transform:rotate(-90deg) scaleX(0.9745);transform-origin:50% 50%;">Calculation of pier Foundation</div>
<div style="position:absolute;left:18.80px;top:542.09px;font:normal normal 9.4px/10.500px 'Liberation Sans';color:#333;white-space:pre;transform:scaleX(0.8910);transform-origin:0 0;-webkit-text-stroke:0.22px currentColor;">Rev.#</div>
<div style="position:absolute;left:60.20px;top:542.09px;font:normal normal 9.4px/10.500px 'Liberation Sans';color:#333;white-space:pre;transform:scaleX(0.7979);transform-origin:0 0;-webkit-text-stroke:0.22px currentColor;">Date</div>
<div style="position:absolute;left:19.80px;top:556.36px;font:normal normal 9px/10.053px 'Liberation Sans';color:#333;white-space:pre;transform:scaleX(0.5194);transform-origin:0 0;-webkit-text-stroke:0.22px currentColor;">1</div>
<div style="position:absolute;left:54.40px;top:556.36px;font:normal normal 9px/10.053px 'Liberation Sans';color:#333;white-space:pre;transform:scaleX(0.8577);transform-origin:0 0;-webkit-text-stroke:0.22px currentColor;">.20/9/07</div>
<div style="position:absolute;left:16.50px;top:186.55px;width:564.00px;height:1.30px;background:#5656c0"></div>
<div style="position:absolute;left:16.90px;top:186.50px;width:1.40px;height:393.80px;background:#5c5cc0"></div>
<div style="position:absolute;left:578.00px;top:186.50px;width:2.40px;height:393.80px;background:#1515c8"></div>
<div style="position:absolute;left:580.00px;top:186.50px;width:428.40px;height:394.00px;background:#a6a6a6"></div>
<div style="position:absolute;left:595.00px;top:192.00px;width:410.50px;height:373.50px;background:#fff"></div>
<svg style="left:0;top:0" width="1024" height="624" viewBox="0 0 1024 624"><rect x="613.80" y="424.70" width="120.80" height="59.10" fill="#fbf9ef" stroke="none" stroke-width="1"/><polyline points="613.80,424.70 734.60,424.70" fill="none" stroke="#333" stroke-width="1"/><polyline points="613.80,424.70 613.80,483.80 692.30,483.80" fill="none" stroke="#333" stroke-width="1"/><rect x="778.30" y="282.40" width="189.30" height="201.50" fill="#fbf9ef" stroke="#333" stroke-width="1"/><rect x="788.80" y="262.10" width="123.80" height="20.30" fill="#22ee7a" stroke="#333" stroke-width="1"/><line x1="794.6" y1="262.1" x2="794.6" y2="282.2" stroke="#333" stroke-width="1"/><polygon points="793.1,279.2 796.1,279.2 794.6,282.2" fill="#333"/><line x1="800.5" y1="262.1" x2="800.5" y2="282.2" stroke="#333" stroke-width="1"/><polygon points="799.0,279.2 802.0,279.2 800.5,282.2" fill="#333"/><line x1="808.4" y1="262.1" x2="808.4" y2="282.2" stroke="#333" stroke-width="1"/><polygon points="806.9,279.2 809.9,279.2 808.4,282.2" fill="#333"/><line x1="817.6" y1="262.1" x2="817.6" y2="282.2" stroke="#333" stroke-width="1"/><polygon points="816.1,279.2 819.1,279.2 817.6,282.2" fill="#333"/><line x1="826.7" y1="262.1" x2="826.7" y2="282.2" stroke="#333" stroke-width="1"/><polygon points="825.2,279.2 828.2,279.2 826.7,282.2" fill="#333"/><line x1="838.7" y1="262.1" x2="838.7" y2="282.2" stroke="#333" stroke-width="1"/><polygon points="837.2,279.2 840.2,279.2 838.7,282.2" fill="#333"/><line x1="851" y1="262.1" x2="851" y2="282.2" stroke="#333" stroke-width="1"/><polygon points="849.5,279.2 852.5,279.2 851,282.2" fill="#333"/><line x1="862.4" y1="262.1" x2="862.4" y2="282.2" stroke="#333" stroke-width="1"/><polygon points="860.9,279.2 863.9,279.2 862.4,282.2" fill="#333"/><line x1="874.7" y1="262.1" x2="874.7" y2="282.2" stroke="#333" stroke-width="1"/><polygon points="873.2,279.2 876.2,279.2 874.7,282.2" fill="#333"/><line x1="886.1" y1="262.1" x2="886.1" y2="282.2" stroke="#333" stroke-width="1"/><polygon points="884.6,279.2 887.6,279.2 886.1,282.2" fill="#333"/><line x1="899.3" y1="262.1" x2="899.3" y2="282.2" stroke="#333" stroke-width="1"/><polygon points="897.8,279.2 900.8,279.2 899.3,282.2" fill="#333"/><rect x="734.60" y="246.40" width="43.70" height="237.40" fill="#ff00ff" stroke="#333" stroke-width="1"/><rect x="692.30" y="483.80" width="216.70" height="44.50" fill="#f8007f" stroke="#333" stroke-width="1"/><polyline points="734.60,229.60 734.60,207.10 778.30,207.10 778.30,229.60" fill="none" stroke="#333" stroke-width="1"/><polyline points="692.50,246.70 671.40,246.70 671.40,483.80" fill="none" stroke="#333" stroke-width="1"/><polyline points="692.30,483.80 692.30,465.10 734.60,465.10" fill="none" stroke="#333" stroke-width="1"/><polyline points="778.30,449.00 909.00,449.00 909.00,470.30" fill="none" stroke="#333" stroke-width="1"/><polyline points="692.30,537.20 692.30,559.40 909.00,559.40 909.00,537.60" fill="none" stroke="#333" stroke-width="1"/><polyline points="942.20,485.00 942.20,528.00 923.10,528.00" fill="none" stroke="#333" stroke-width="1"/><polyline points="912.50,261.90 942.40,229.50" fill="none" stroke="#333" stroke-width="1"/><line x1="845.3" y1="228" x2="845.3" y2="282" stroke="#333" stroke-width="1"/><polygon points="842.3,274 848.3,274 845.3,282" fill="#fff" stroke="#333" stroke-width="0.8"/><line x1="845.9" y1="354.8" x2="845.9" y2="407" stroke="#333" stroke-width="1"/><polygon points="842.9,399 848.9,399 845.9,407" fill="#fff" stroke="#333" stroke-width="0.8"/><line x1="756.9" y1="353" x2="756.9" y2="407" stroke="#333" stroke-width="1"/><polygon points="753.9,399 759.9,399 756.9,407" fill="#fff" stroke="#333" stroke-width="0.8"/><line x1="708.2" y1="393.8" x2="708.2" y2="447.8" stroke="#333" stroke-width="1"/><polygon points="705.2,439.8 711.2,439.8 708.2,447.8" fill="#fff" stroke="#333" stroke-width="0.8"/><line x1="845.5" y1="471.4" x2="845.5" y2="525.4" stroke="#333" stroke-width="1"/><polygon points="842.5,517.4 848.5,517.4 845.5,525.4" fill="#fff" stroke="#333" stroke-width="0.8"/></svg>
<div style="position:absolute;left:825.50px;top:207.91px;font:normal normal 23.3px/26.026px 'Liberation Sans';color:#222;white-space:pre;transform:scaleX(1.0297);transform-origin:0 0;">P</div>
<div style="position:absolute;left:946.50px;top:212.57px;font:normal normal 25px/27.925px 'Liberation Sans';color:#222;white-space:pre;transform:scaleX(1.0429);transform-origin:0 0;">q</div>
<div style="position:absolute;left:840.30px;top:331.72px;font:normal normal 25.5px/28.483px 'Liberation Sans';color:#222;white-space:pre;transform:scaleX(1.0719);transform-origin:0 0;">W1</div>
<div style="position:absolute;left:744.00px;top:355.02px;font:normal normal 26.5px/29.601px 'Liberation Sans';color:#222;white-space:pre;transform:scaleX(1.0314);transform-origin:0 0;">W3</div>
<div style="position:absolute;left:694.60px;top:395.02px;font:normal normal 26.5px/29.601px 'Liberation Sans';color:#222;white-space:pre;transform:scaleX(1.0063);transform-origin:0 0;">W4</div>
<div style="position:absolute;left:858.00px;top:484.61px;font:normal normal 28.5px/31.834px 'Liberation Sans';color:#222;white-space:pre;transform:scaleX(0.9708);transform-origin:0 0;">W2</div>
<div style="position:absolute;left:836.30px;top:435.83px;font:normal normal 14px/15.638px 'Liberation Sans';color:#222;white-space:pre;transform:scaleX(1.1991);transform-origin:0 0;">fa</div>
<div style="position:absolute;left:706.20px;top:453.03px;font:normal normal 14px/15.638px 'Liberation Sans';color:#222;white-space:pre;transform:scaleX(1.1020);transform-origin:0 0;">ct</div>
<div style="position:absolute;left:748.20px;top:194.33px;font:normal normal 14px/15.638px 'Liberation Sans';color:#222;white-space:pre;transform:scaleX(1.1429);transform-origin:0 0;">wt</div>
<div style="position:absolute;left:794.30px;top:544.47px;font:normal normal 16.5px/18.430px 'Liberation Sans';color:#222;white-space:pre;">A</div>
<div style="position:absolute;left:653.17px;top:359.12px;width:21.67px;font:normal 15px/16.755px 'Liberation Sans';color:#222;white-space:nowrap;text-align:center;transform:rotate(-90deg) scaleX(0.8770);transform-origin:50% 50%;">Hw</div>
<div style="position:absolute;left:950.83px;top:376.32px;width:18.33px;font:normal 15px/16.755px 'Liberation Sans';color:#222;white-space:nowrap;text-align:center;transform:rotate(-90deg) scaleX(0.9055);transform-origin:50% 50%;">Hs</div>
<div style="position:absolute;left:600.08px;top:445.92px;width:15.84px;font:normal 15px/16.755px 'Liberation Sans';color:#222;white-space:nowrap;text-align:center;transform:rotate(-90deg) scaleX(1.0100);transform-origin:50% 50%;">sd</div>
<div style="position:absolute;left:927.53px;top:498.62px;width:13.33px;font:normal 15px/16.755px 'Liberation Sans';color:#222;white-space:nowrap;text-align:center;transform:rotate(-90deg) scaleX(0.9152);transform-origin:50% 50%;">Ft</div>
<div style="position:absolute;left:1008.40px;top:173.00px;width:15.60px;height:407.50px;background:#e2e2e2"></div>
<div style="position:absolute;left:1011.50px;top:176.00px;width:10.00px;height:11.70px;background:#fff;border:1px solid #d0d0d0;box-sizing:border-box"></div>
<div style="position:absolute;left:1011.50px;top:187.70px;width:10.00px;height:14.50px;background:#fff;border:1px solid #d0d0d0;box-sizing:border-box"></div>
<div style="position:absolute;left:1012.00px;top:569.00px;width:9.50px;height:11.60px;background:#fff;border:1px solid #d0d0d0;box-sizing:border-box"></div>
<svg style="left:0;top:0" width="1024" height="624"><polygon points="1013.8,183.6 1019.2,183.6 1016.5,180" fill="#555"/><polygon points="1014,573.5 1019.5,573.5 1016.75,577" fill="#555"/></svg>
<div style="position:absolute;left:0.00px;top:580.30px;width:1024.00px;height:24.00px;background:#e6e6e6"></div>
<div style="position:absolute;left:14.00px;top:580.30px;width:61.50px;height:24.00px;background:#e1e1e1"></div>
<div style="position:absolute;left:0.00px;top:580.30px;width:1024.00px;height:0.80px;background:#c8c8c8"></div>
<div style="position:absolute;left:75.20px;top:580.30px;width:49.20px;height:20.50px;background:#fff"></div>
<div style="position:absolute;left:75.20px;top:599.20px;width:49.20px;height:1.80px;background:#217346"></div>
<div style="position:absolute;left:83.40px;top:585.25px;font:normal bold 11px/12.287px 'Liberation Sans';color:#217346;white-space:pre;transform:scaleX(0.8705);transform-origin:0 0;">Sheet1</div>
<div style="position:absolute;left:133.40px;top:585.25px;font:normal normal 11px/12.287px 'Liberation Sans';color:#444;white-space:pre;transform:scaleX(0.8404);transform-origin:0 0;-webkit-text-stroke:0.22px currentColor;">Sheet2</div>
<div style="position:absolute;left:181.80px;top:585.25px;font:normal normal 11px/12.287px 'Liberation Sans';color:#444;white-space:pre;transform:scaleX(0.8662);transform-origin:0 0;-webkit-text-stroke:0.22px currentColor;">Sheet3</div>
<div style="position:absolute;left:172.50px;top:584.00px;width:0.80px;height:14.00px;background:#bdbdbd"></div>
<div style="position:absolute;left:219.80px;top:584.00px;width:0.80px;height:14.00px;background:#bdbdbd"></div>
<svg style="left:0;top:0" width="1024" height="624"><circle cx="252.2" cy="591.5" r="5.6" fill="none" stroke="#777" stroke-width="1"/><line x1="249" y1="591.5" x2="255.4" y2="591.5" stroke="#777" stroke-width="1.1"/><line x1="252.2" y1="588.3" x2="252.2" y2="594.7" stroke="#777" stroke-width="1.1"/><polygon points="23.5,588.5 23.5,594.5 20.5,591.5" fill="#c4c4c4"/><polygon points="41,588.5 41,594.5 44,591.5" fill="#c4c4c4"/><circle cx="614.7" cy="587.5" r="0.7" fill="#999"/><circle cx="614.7" cy="591.5" r="0.7" fill="#999"/><circle cx="614.7" cy="595.5" r="0.7" fill="#999"/></svg>
<div style="position:absolute;left:627.00px;top:586.50px;width:371.00px;height:12.20px;background:#dcdcdc"></div>
<div style="position:absolute;left:627.00px;top:586.50px;width:312.70px;height:12.20px;background:#fff;border:1px solid #d0d0d0;box-sizing:border-box"></div>
<div style="position:absolute;left:627.00px;top:586.50px;width:11.00px;height:12.20px;background:#fff;border:1px solid #c8c8c8;box-sizing:border-box"></div>
<div style="position:absolute;left:997.60px;top:586.50px;width:10.20px;height:12.20px;background:#fff;border:1px solid #d0d0d0;box-sizing:border-box"></div>
<svg style="left:0;top:0" width="1024" height="624"><polygon points="634.3,589.5 634.3,595.5 631.3,592.5" fill="#555"/><polygon points="1001.3,589.5 1001.3,595.5 1004.3,592.5" fill="#555"/></svg>
<div style="position:absolute;left:0.00px;top:604.30px;width:1024.00px;height:18.50px;background:#f1f1f1"></div>
<div style="position:absolute;left:0.00px;top:603.80px;width:1024.00px;height:0.90px;background:#cdcdcd"></div>
<div style="position:absolute;left:0.00px;top:622.60px;width:1024.00px;height:1.40px;background:#333a40"></div>
<div style="position:absolute;left:6.00px;top:606.70px;font:normal normal 10.5px/11.729px 'Liberation Sans';color:#444;white-space:pre;transform:scaleX(0.7479);transform-origin:0 0;-webkit-text-stroke:0.22px currentColor;">Ready</div>
<div style="position:absolute;left:864.30px;top:604.30px;width:29.70px;height:17.00px;background:#d4d4d4"></div>
<svg style="left:0;top:0" width="1024" height="624" stroke="#666" fill="none" stroke-width="1"><rect x="813.3" y="607.8" width="10.5" height="10"/><line x1="816.8" y1="607.8" x2="816.8" y2="617.8"/><line x1="820.3" y1="607.8" x2="820.3" y2="617.8"/><line x1="813.3" y1="611.1" x2="823.8" y2="611.1"/><line x1="813.3" y1="614.5" x2="823.8" y2="614.5"/><rect x="843" y="607.8" width="10.5" height="10"/><rect x="845.5" y="609.8" width="5.5" height="6"/><rect x="873.8" y="607.8" width="9.6" height="10"/><polyline points="877,607.8 877,613 880.5,613 880.5,607.8"/><line x1="898.5" y1="612.5" x2="904.3" y2="612.5" stroke-width="1.2"/><line x1="907.7" y1="612.5" x2="983" y2="612.5" stroke="#aaa"/><line x1="986.5" y1="612.5" x2="992.2" y2="612.5" stroke-width="1.2"/><line x1="989.35" y1="609.6" x2="989.35" y2="615.4" stroke-width="1.2"/></svg>
<div style="position:absolute;left:938.00px;top:608.50px;width:3.80px;height:8.00px;background:#666"></div>
<div style="position:absolute;left:1001.40px;top:606.90px;font:normal normal 10.5px/11.729px 'Liberation Sans';color:#444;white-space:pre;transform:scaleX(0.8137);transform-origin:0 0;-webkit-text-stroke:0.22px currentColor;">84%</div>
<div style="position:absolute;left:434.60px;top:573.31px;font:normal bold 34px/37.638px 'Liberation Serif';color:#e66476;white-space:pre;transform:scaleX(0.9326);transform-origin:0 0;text-shadow:-2.5px 1.5px 1.6px rgba(50,50,50,0.9);">Draftter.com</div>

<div style="position:absolute;left:249.50px;top:68.64px;font:normal normal 12px/13.404px 'Liberation Sans';color:#555;white-space:pre;transform:scaleX(1.0370);transform-origin:0 0;-webkit-text-stroke:0.22px currentColor;">A</div>
<div style="position:absolute;left:267.00px;top:70.00px;font:normal normal 10.5px/11.729px 'Liberation Sans';color:#555;white-space:pre;transform:scaleX(1.0709);transform-origin:0 0;-webkit-text-stroke:0.22px currentColor;">A</div>
<div style="position:absolute;left:134.20px;top:93.64px;font:normal bold 11px/12.287px 'Liberation Sans';color:#444;white-space:pre;transform:scaleX(0.7931);transform-origin:0 0;">B</div>
<div style="position:absolute;left:151.80px;top:93.64px;font:italic normal 11px/12.287px 'Liberation Sans';color:#444;white-space:pre;transform:scaleX(1.5052);transform-origin:0 0;-webkit-text-stroke:0.22px currentColor;">I</div>
<div style="position:absolute;left:167.40px;top:93.64px;font:normal normal 11px/12.287px 'Liberation Sans';color:#444;white-space:pre;transform:scaleX(0.8812);transform-origin:0 0;-webkit-text-stroke:0.22px currentColor;">U</div>
<div style="position:absolute;left:257.00px;top:92.19px;font:normal normal 11.5px/12.845px 'Liberation Sans';color:#555;white-space:pre;transform:scaleX(1.0951);transform-origin:0 0;-webkit-text-stroke:0.22px currentColor;">A</div>
<div style="position:absolute;left:346.00px;top:68.36px;font:normal normal 9px/10.053px 'Liberation Sans';color:#666;white-space:pre;-webkit-text-stroke:0.22px currentColor;transform:rotate(-45deg);transform-origin:5px 5px;">ab</div>
<div style="position:absolute;left:390.00px;top:65.40px;font:normal normal 9.5px/10.611px 'Liberation Sans';color:#666;white-space:pre;transform:scaleX(0.8990);transform-origin:0 0;-webkit-text-stroke:0.22px currentColor;">ab</div>
<div style="position:absolute;left:498.00px;top:93.34px;font:normal normal 12px/13.404px 'Liberation Sans';color:#555;white-space:pre;transform:scaleX(0.9740);transform-origin:0 0;-webkit-text-stroke:0.22px currentColor;">$</div>
<div style="position:absolute;left:523.00px;top:93.34px;font:normal normal 12px/13.404px 'Liberation Sans';color:#555;white-space:pre;transform:scaleX(0.8997);transform-origin:0 0;-webkit-text-stroke:0.22px currentColor;">%</div>
<div style="position:absolute;left:541.00px;top:90.33px;font:normal bold 14px/15.638px 'Liberation Sans';color:#555;white-space:pre;transform:scaleX(0.7713);transform-origin:0 0;">,</div>
<div style="position:absolute;left:563.50px;top:92.21px;font:normal normal 7.5px/8.377px 'Liberation Sans';color:#666;white-space:pre;transform:scaleX(1.2790);transform-origin:0 0;-webkit-text-stroke:0.22px currentColor;">.0</div>
<div style="position:absolute;left:563.00px;top:97.71px;font:normal normal 7.5px/8.377px 'Liberation Sans';color:#666;white-space:pre;transform:scaleX(0.9112);transform-origin:0 0;-webkit-text-stroke:0.22px currentColor;">.00</div>
<div style="position:absolute;left:578.50px;top:92.21px;font:normal normal 7.5px/8.377px 'Liberation Sans';color:#666;white-space:pre;transform:scaleX(0.9112);transform-origin:0 0;-webkit-text-stroke:0.22px currentColor;">.00</div>
<div style="position:absolute;left:581.00px;top:97.71px;font:normal normal 7.5px/8.377px 'Liberation Sans';color:#666;white-space:pre;transform:scaleX(1.2790);transform-origin:0 0;-webkit-text-stroke:0.22px currentColor;">.0</div>
<div style="position:absolute;left:853.50px;top:58.72px;font:normal normal 15px/16.755px 'Liberation Sans';color:#444;white-space:pre;transform:scaleX(1.2402);transform-origin:0 0;">Σ</div>
<div style="position:absolute;left:924.80px;top:62.05px;font:normal bold 11px/12.287px 'Liberation Sans';color:#3c76c0;white-space:pre;transform:scaleX(1.0700);transform-origin:0 0;">A</div>
<div style="position:absolute;left:925.00px;top:74.55px;font:normal bold 11px/12.287px 'Liberation Sans';color:#a35bb5;white-space:pre;transform:scaleX(1.1162);transform-origin:0 0;">Z</div>
<div style="position:absolute;left:167.50px;top:148.64px;font:italic normal 10.5px/11.623px 'Liberation Serif';color:#666;white-space:pre;transform:scaleX(1.0557);transform-origin:0 0;-webkit-text-stroke:0.22px currentColor;">fx</div>
<svg style="left:0;top:0" width="1024" height="624" viewBox="0 0 1024 624"><rect x="16.6" y="8.5" width="10" height="11.5" rx="1" fill="none" stroke="#e8f1eb" stroke-width="1.3"/><rect x="19" y="8.5" width="5.2" height="3.8" fill="none" stroke="#e8f1eb" stroke-width="1.1"/><rect x="19.2" y="15.5" width="4.8" height="4.5" fill="none" stroke="#e8f1eb" stroke-width="1.1"/><path d="M41.5 9 L38.3 12.3 L41.5 15.5 M38.3 12.3 H44.5 A4 4 0 0 1 44.5 19.5 H42.5" fill="none" stroke="#e8f1eb" stroke-width="1.5"/><polygon points="52.95,12.30 57.15,12.30 55.05,14.60" fill="#e8f1eb"/><path d="M70.5 9 L73.7 12.3 L70.5 15.5 M73.7 12.3 H67.5 A4 4 0 0 0 67.5 19.5 H69.5" fill="none" stroke="#5f9a78" stroke-width="1.5"/><polygon points="78.40,12.30 82.60,12.30 80.50,14.60" fill="#5f9a78"/><line x1="92.6" y1="10.6" x2="99.2" y2="10.6" stroke="#a9cdb6" stroke-width="1"/><polyline points="93,12.8 95.9,15.8 98.8,12.8" fill="none" stroke="#a9cdb6" stroke-width="1"/><polygon points="93.3,16 98.5,16 95.9,18" fill="#a9cdb6"/><rect x="898" y="9.8" width="10.5" height="7.2" fill="none" stroke="#b5d4c0" stroke-width="1"/><line x1="898" y1="11.8" x2="908.5" y2="11.8" stroke="#b5d4c0" stroke-width="1"/><polyline points="902,14.8 903.2,13.3 904.4,14.8" fill="none" stroke="#b5d4c0" stroke-width="0.8"/><line x1="934.5" y1="13.5" x2="942.5" y2="13.5" stroke="#b5d4c0" stroke-width="1"/><rect x="968.4" y="11" width="6" height="6" fill="none" stroke="#b5d4c0" stroke-width="1"/><polyline points="970.4,11 970.4,9.2 976.3,9.2 976.3,15 974.4,15" fill="none" stroke="#b5d4c0" stroke-width="1"/><path d="M1003.3 9 L1011.2 17.5 M1011.2 9 L1003.3 17.5" stroke="#b5d4c0" stroke-width="1.1"/><path d="M436 44.5 C432.5 41.5 433 35.5 438.2 35.5 C443.5 35.5 444 41.5 440.5 44.5 V46.5 H436 Z" fill="none" stroke="#e8f1eb" stroke-width="1.1"/><line x1="436.5" y1="48.3" x2="440" y2="48.3" stroke="#e8f1eb" stroke-width="1"/><circle cx="975" cy="38.5" r="3.6" fill="none" stroke="#e8f1eb" stroke-width="1.2"/><path d="M969.5 49 C969.8 44.5 972 42.5 975 42.5 C977 42.5 978.3 43.2 979.2 44.3" fill="none" stroke="#e8f1eb" stroke-width="1.2"/><path d="M980 44.5 V49.5 M977.5 47 H982.5" stroke="#e8f1eb" stroke-width="1.1"/><rect x="12.8" y="64" width="17.7" height="21.2" fill="#f0c674"/><rect x="16.5" y="62.5" width="10.4" height="4.3" rx="1" fill="#6e6e6e"/><rect x="19.8" y="60.8" width="4" height="2.6" rx="1" fill="#6e6e6e"/><path d="M23.5 71.2 H30.2 L33.6 74.6 V86.8 H23.5 Z" fill="#fff" stroke="#8a8a8a" stroke-width="0.9"/><path d="M30.2 71.2 V74.6 H33.6" fill="none" stroke="#8a8a8a" stroke-width="0.8"/><polygon points="19.65,108.30 23.85,108.30 21.75,110.60" fill="#555"/><path d="M42 61 L48.2 69 M49.6 61 L43.4 69" stroke="#5a5a5a" stroke-width="1.2"/><circle cx="42.8" cy="70.2" r="2.2" fill="none" stroke="#5b87c7" stroke-width="1.2"/><circle cx="48.6" cy="70.2" r="2.2" fill="none" stroke="#5b87c7" stroke-width="1.2"/><path d="M39.8 80.5 H45 L46.5 82 V89 H39.8 Z" fill="#fff" stroke="#777" stroke-width="0.9"/><path d="M43.2 83.5 H48.4 L50.5 85.6 V92 H43.2 Z" fill="#fff" stroke="#777" stroke-width="0.9"/><line x1="44.8" y1="87" x2="49" y2="87" stroke="#999" stroke-width="0.7"/><line x1="44.8" y1="89" x2="49" y2="89" stroke="#999" stroke-width="0.7"/><line x1="41.2" y1="83" x2="44" y2="83" stroke="#999" stroke-width="0.7"/><line x1="41.2" y1="85" x2="42.5" y2="85" stroke="#999" stroke-width="0.7"/><polygon points="80.90,86.20 85.10,86.20 83.00,88.50" fill="#555"/><path d="M40.8 108.5 L45.5 103.2 L49 106.8 L43.6 111.8 Z" fill="#e8c46a"/><path d="M45.8 103 L49.5 99.6 L52 102 L48.9 106.6 Z" fill="#505050"/><rect x="117.5" y="124" width="5.5" height="5.5" fill="none" stroke="#8a8a8a" stroke-width="0.8" stroke-dasharray="3 1.5"/><path d="M119.1 125.6 L122.5 129 M122.5 126.8 V129 H120.3" fill="none" stroke="#666" stroke-width="0.8"/><rect x="277.6" y="124" width="5.5" height="5.5" fill="none" stroke="#8a8a8a" stroke-width="0.8" stroke-dasharray="3 1.5"/><path d="M279.20000000000005 125.6 L282.6 129 M282.6 126.8 V129 H280.40000000000003" fill="none" stroke="#666" stroke-width="0.8"/><rect x="481" y="124" width="5.5" height="5.5" fill="none" stroke="#8a8a8a" stroke-width="0.8" stroke-dasharray="3 1.5"/><path d="M482.6 125.6 L486 129 M486 126.8 V129 H483.8" fill="none" stroke="#666" stroke-width="0.8"/><rect x="590.6" y="124" width="5.5" height="5.5" fill="none" stroke="#8a8a8a" stroke-width="0.8" stroke-dasharray="3 1.5"/><path d="M592.2 125.6 L595.6 129 M595.6 126.8 V129 H593.4" fill="none" stroke="#666" stroke-width="0.8"/><polyline points="189,71.5 194,76.5 199,71.5" fill="none" stroke="#555" stroke-width="1.1"/><polyline points="232.5,71.5 237.5,76.5 242.5,71.5" fill="none" stroke="#555" stroke-width="1.1"/><polygon points="256.5,69 259.5,69 258,67" fill="#3b73b9"/><polygon points="273.40,67.20 277.60,67.20 275.50,69.50" fill="#3b73b9"/><line x1="167" y1="105.2" x2="174.4" y2="105.2" stroke="#777" stroke-width="0.9"/><polygon points="181.50,99.10 185.70,99.10 183.60,101.40" fill="#555"/><polygon points="213.70,99.10 217.90,99.10 215.80,101.40" fill="#555"/><polygon points="246.40,99.10 250.60,99.10 248.50,101.40" fill="#555"/><polygon points="271.50,99.10 275.70,99.10 273.60,101.40" fill="#555"/><rect x="197.5" y="94.2" width="10.2" height="10.5" fill="none" stroke="#9a9a9a" stroke-width="0.9" stroke-dasharray="1.2 0.6"/><line x1="202.6" y1="94.2" x2="202.6" y2="104.7" stroke="#9a9a9a" stroke-width="0.8"/><line x1="197.5" y1="99.45" x2="207.7" y2="99.45" stroke="#9a9a9a" stroke-width="0.8"/><line x1="192.2" y1="92" x2="192.2" y2="107.5" stroke="#d8d8d8"/><line x1="223.4" y1="92" x2="223.4" y2="107.5" stroke="#d8d8d8"/><path d="M233.5 94.8 L237.8 99 L234.6 102.2 L230.4 98 Z" fill="#fff" stroke="#666" stroke-width="0.9"/><path d="M238.5 98.5 C240.5 99.5 241 101.2 240 102 C239 101.2 238.5 100 238.5 98.5Z" fill="#3c76c0"/><line x1="232.5" y1="93.5" x2="232.5" y2="97" stroke="#666" stroke-width="0.8"/><rect x="229.5" y="103.7" width="12" height="2.9" fill="#ffff00"/><rect x="254.7" y="103.5" width="12.2" height="3" fill="#e00000"/><line x1="293.2" y1="66.8" x2="303.8" y2="66.8" stroke="#707070" stroke-width="1.1"/><line x1="293.2" y1="69.4" x2="303.8" y2="69.4" stroke="#707070" stroke-width="1.1"/><line x1="293.2" y1="72.2" x2="303.8" y2="72.2" stroke="#707070" stroke-width="1.1"/><line x1="309.4" y1="70" x2="320" y2="70" stroke="#707070" stroke-width="1.1"/><line x1="309.4" y1="72.8" x2="320" y2="72.8" stroke="#707070" stroke-width="1.1"/><line x1="309.4" y1="75.6" x2="320" y2="75.6" stroke="#707070" stroke-width="1.1"/><rect x="323" y="64.1" width="16.5" height="19.4" fill="#c6c6c6"/><line x1="326.6" y1="74.4" x2="336" y2="74.4" stroke="#707070" stroke-width="1.1"/><line x1="326.6" y1="77.2" x2="336" y2="77.2" stroke="#707070" stroke-width="1.1"/><line x1="326.6" y1="80" x2="336" y2="80" stroke="#707070" stroke-width="1.1"/><line x1="293.2" y1="96.1" x2="303.7" y2="96.1" stroke="#707070" stroke-width="1.1"/><line x1="293.2" y1="98.6" x2="300.2" y2="98.6" stroke="#707070" stroke-width="1.1"/><line x1="293.2" y1="101.3" x2="303.7" y2="101.3" stroke="#707070" stroke-width="1.1"/><line x1="293.2" y1="103.9" x2="300.2" y2="103.9" stroke="#707070" stroke-width="1.1"/><line x1="309.4" y1="96.1" x2="319.9" y2="96.1" stroke="#707070" stroke-width="1.1"/><line x1="311.2" y1="98.6" x2="318.09999999999997" y2="98.6" stroke="#707070" stroke-width="1.1"/><line x1="309.4" y1="101.3" x2="319.9" y2="101.3" stroke="#707070" stroke-width="1.1"/><line x1="311.2" y1="103.9" x2="318.09999999999997" y2="103.9" stroke="#707070" stroke-width="1.1"/><line x1="325.8" y1="96.1" x2="336.3" y2="96.1" stroke="#707070" stroke-width="1.1"/><line x1="329.3" y1="98.6" x2="336.3" y2="98.6" stroke="#707070" stroke-width="1.1"/><line x1="325.8" y1="101.3" x2="336.3" y2="101.3" stroke="#707070" stroke-width="1.1"/><line x1="329.3" y1="103.9" x2="336.3" y2="103.9" stroke="#707070" stroke-width="1.1"/><line x1="342.4" y1="63.3" x2="342.4" y2="84" stroke="#d8d8d8"/><line x1="343.5" y1="91" x2="343.5" y2="108" stroke="#d8d8d8"/><line x1="382.3" y1="63" x2="382.3" y2="108" stroke="#d8d8d8"/><line x1="351" y1="80" x2="361.5" y2="69.5" stroke="#666" stroke-width="1.1"/><polygon points="364.10,72.20 368.30,72.20 366.20,74.50" fill="#555"/><path d="M392.8 74.5 C389.5 75 389.5 79.5 392.8 79.5 M396.5 77 L397.8 78.6 L399.5 76" fill="none" stroke="#666" stroke-width="0.9"/><line x1="348.3" y1="94.6" x2="360.6" y2="94.6" stroke="#707070" stroke-width="1"/><line x1="353.8" y1="97.2" x2="360.6" y2="97.2" stroke="#707070" stroke-width="1"/><line x1="353.8" y1="99.7" x2="360.6" y2="99.7" stroke="#707070" stroke-width="1"/><line x1="353.8" y1="102.2" x2="360.6" y2="102.2" stroke="#707070" stroke-width="1"/><line x1="348.3" y1="104.7" x2="360.6" y2="104.7" stroke="#707070" stroke-width="1"/><path d="M352.8 99.7 H348.3 M350.3 97.7 L348.3 99.7 L350.3 101.7" fill="none" stroke="#3c76c0" stroke-width="1.2"/><line x1="365.3" y1="94.6" x2="377.6" y2="94.6" stroke="#707070" stroke-width="1"/><line x1="370.8" y1="97.2" x2="377.6" y2="97.2" stroke="#707070" stroke-width="1"/><line x1="370.8" y1="99.7" x2="377.6" y2="99.7" stroke="#707070" stroke-width="1"/><line x1="370.8" y1="102.2" x2="377.6" y2="102.2" stroke="#707070" stroke-width="1"/><line x1="365.3" y1="104.7" x2="377.6" y2="104.7" stroke="#707070" stroke-width="1"/><path d="M365.3 99.7 H369.8 M367.8 97.7 L369.8 99.7 L367.8 101.7" fill="none" stroke="#3c76c0" stroke-width="1.2"/><rect x="388.5" y="93.4" width="10.8" height="12" fill="none" stroke="#777" stroke-width="0.9"/><line x1="388.5" y1="96.5" x2="399.3" y2="96.5" stroke="#777" stroke-width="0.8"/><line x1="388.5" y1="102.3" x2="399.3" y2="102.3" stroke="#777" stroke-width="0.8"/><line x1="390.5" y1="99.4" x2="397.3" y2="99.4" stroke="#3c76c0" stroke-width="0.9"/><line x1="393.9" y1="93.4" x2="393.9" y2="96.5" stroke="#777" stroke-width="0.7"/><line x1="393.9" y1="102.3" x2="393.9" y2="105.4" stroke="#777" stroke-width="0.7"/><polygon points="473.80,99.20 478.00,99.20 475.90,101.50" fill="#555"/><polyline points="577.5,71.5 583.5,77 589.5,71.5" fill="none" stroke="#555" stroke-width="1.1"/><polygon points="511.20,99.30 515.40,99.30 513.30,101.60" fill="#555"/><line x1="555" y1="92" x2="555" y2="108" stroke="#d8d8d8"/><path d="M564.5 96.5 H561 M562.5 95 L561 96.5 L562.5 98" fill="none" stroke="#3c76c0" stroke-width="1"/><path d="M578 102 H581.5 M580 100.5 L581.5 102 L580 103.5" fill="none" stroke="#3c76c0" stroke-width="1"/><rect x="619.8" y="61.5" width="21.299999999999997" height="21.2" fill="#fff" stroke="#8a8a8a" stroke-width="0.9"/><line x1="626.9" y1="61.5" x2="626.9" y2="82.7" stroke="#9a9a9a" stroke-width="0.8"/><line x1="634.0" y1="61.5" x2="634.0" y2="82.7" stroke="#9a9a9a" stroke-width="0.8"/><line x1="619.8" y1="66.8" x2="641.0999999999999" y2="66.8" stroke="#9a9a9a" stroke-width="0.8"/><line x1="619.8" y1="72.1" x2="641.0999999999999" y2="72.1" stroke="#9a9a9a" stroke-width="0.8"/><line x1="619.8" y1="77.4" x2="641.0999999999999" y2="77.4" stroke="#9a9a9a" stroke-width="0.8"/><rect x="626.9" y="62.0" width="4" height="4.3" fill="#d9573f"/><rect x="626.9" y="67.3" width="8.6" height="4.3" fill="#3f7cc0"/><rect x="626.9" y="72.6" width="5" height="4.3" fill="#d9573f"/><rect x="626.9" y="77.9" width="3" height="4.3" fill="#3f7cc0"/><rect x="630.8" y="76.5" width="12.2" height="10.3" fill="#fff" stroke="#777" stroke-width="0.9"/><path d="M633.5 80.3 H640 M633.5 82.8 H640 M638.6 78.3 L634.8 85" stroke="#555" stroke-width="0.9" fill="none"/><rect x="668.4" y="62.8" width="19.1" height="18.5" fill="#c5d7ea" stroke="#8a8a8a" stroke-width="0.9"/><line x1="673.18" y1="62.8" x2="673.18" y2="81.3" stroke="#fff" stroke-width="0.8"/><line x1="677.9599999999999" y1="62.8" x2="677.9599999999999" y2="81.3" stroke="#fff" stroke-width="0.8"/><line x1="682.74" y1="62.8" x2="682.74" y2="81.3" stroke="#fff" stroke-width="0.8"/><line x1="668.4" y1="67.39999999999999" x2="687.5" y2="67.39999999999999" stroke="#fff" stroke-width="0.8"/><line x1="668.4" y1="72.0" x2="687.5" y2="72.0" stroke="#fff" stroke-width="0.8"/><line x1="668.4" y1="76.6" x2="687.5" y2="76.6" stroke="#fff" stroke-width="0.8"/><path d="M691.5 69 L680.5 80.5" stroke="#6a6a6a" stroke-width="2.4"/><path d="M680.5 79.5 C676.5 80 675 84 673.8 87 C677.5 87 681.5 85.5 682.3 81.3 Z" fill="#3c76c0"/><rect x="706" y="61.5" width="19.8" height="23" fill="#fff" stroke="#8a8a8a" stroke-width="0.9"/><rect x="708.8" y="66.5" width="14.5" height="9" fill="#c5d7ea"/><line x1="706" y1="66" x2="725.8" y2="66" stroke="#9a9a9a" stroke-width="0.8"/><line x1="708.5" y1="61.5" x2="708.5" y2="84.5" stroke="#9a9a9a" stroke-width="0.8"/><path d="M729 68 L718.5 79.5" stroke="#6a6a6a" stroke-width="2.4"/><path d="M718.5 78.5 C714.5 79 713 83 711.8 86 C715.5 86 719.5 84.5 720.3 80.3 Z" fill="#3c76c0"/><polygon points="651.90,109.70 656.10,109.70 654.00,112.00" fill="#555"/><polygon points="688.70,109.70 692.90,109.70 690.80,112.00" fill="#555"/><polygon points="726.40,109.70 730.60,109.70 728.50,112.00" fill="#555"/><rect x="750.5" y="62" width="11" height="5" fill="#fff" stroke="#8a8a8a" stroke-width="0.9"/><line x1="756.0" y1="62" x2="756.0" y2="67" stroke="#8a8a8a" stroke-width="0.8"/><rect x="750.5" y="76" width="11" height="9" fill="#fff" stroke="#8a8a8a" stroke-width="0.9"/><line x1="756" y1="76" x2="756" y2="85" stroke="#8a8a8a" stroke-width="0.8"/><line x1="750.5" y1="80.5" x2="761.5" y2="80.5" stroke="#8a8a8a" stroke-width="0.8"/><rect x="758.5" y="69.2" width="11.5" height="5" fill="#c5d7ea" stroke="#8a8a8a" stroke-width="0.8"/><path d="M756 71.7 H751 M753 69.9 L751 71.7 L753 73.5" fill="none" stroke="#3c76c0" stroke-width="1.1"/><rect x="781.5" y="62" width="11" height="5" fill="#fff" stroke="#8a8a8a" stroke-width="0.9"/><line x1="787.0" y1="62" x2="787.0" y2="67" stroke="#8a8a8a" stroke-width="0.8"/><rect x="781.5" y="76" width="11" height="9" fill="#fff" stroke="#8a8a8a" stroke-width="0.9"/><line x1="787" y1="76" x2="787" y2="85" stroke="#8a8a8a" stroke-width="0.8"/><line x1="781.5" y1="80.5" x2="792.5" y2="80.5" stroke="#8a8a8a" stroke-width="0.8"/><rect x="785" y="69.2" width="6" height="5" fill="#c5d7ea" stroke="#8a8a8a" stroke-width="0.8"/><path d="M792.5 67.5 L803 78 M803 67.5 L792.5 78" stroke="#e05a3a" stroke-width="1.4"/><rect x="813" y="66.5" width="20.5" height="15.5" fill="#fff" stroke="#8a8a8a" stroke-width="0.9"/><line x1="819.5" y1="66.5" x2="819.5" y2="82" stroke="#9a9a9a" stroke-width="0.8"/><line x1="826.5" y1="66.5" x2="826.5" y2="82" stroke="#9a9a9a" stroke-width="0.8"/><rect x="820.3" y="68.5" width="5.5" height="9.5" fill="#3c76c0"/><path d="M814 84 H832 M816 82 V85 M826 82 V85" fill="none" stroke="#9a9a9a" stroke-width="0.8"/><path d="M814.5 62.5 H832 M814.5 60.8 V64.2 M832 60.8 V64.2 M817 62.5 L818.5 61.3 M817 62.5 L818.5 63.7 M829.5 62.5 L828 61.3 M829.5 62.5 L828 63.7" fill="none" stroke="#3c76c0" stroke-width="0.9"/><polygon points="757.60,108.50 761.80,108.50 759.70,110.80" fill="#555"/><polygon points="789.00,108.50 793.20,108.50 791.10,110.80" fill="#555"/><polygon points="821.50,108.50 825.70,108.50 823.60,110.80" fill="#555"/><polygon points="913.40,66.70 917.60,66.70 915.50,69.00" fill="#555"/><rect x="855.5" y="80.5" width="9.5" height="12" fill="#fff" stroke="#777" stroke-width="0.9"/><rect x="855.5" y="80.5" width="9.5" height="2.2" fill="#777"/><path d="M860.25 84 V90 M858 87.8 L860.25 90.2 L862.5 87.8" fill="none" stroke="#3c76c0" stroke-width="1.2"/><polygon points="882.70,86.20 886.90,86.20 884.80,88.50" fill="#555"/><polygon points="890.70,106.00 894.90,106.00 892.80,108.30" fill="#555"/><path d="M856 108 L861.5 101.5 L865 104.5 L859.5 111 L856.5 111 Z" fill="#e87588"/><path d="M934.5 68 H947.5 L942.5 74 V79.5 L939.5 81.5 V74 Z" fill="#6a6a6a"/><circle cx="972.8" cy="68.5" r="5.8" fill="none" stroke="#3c76c0" stroke-width="2"/><line x1="968.3" y1="73" x2="958.8" y2="83.5" stroke="#3c76c0" stroke-width="2.4" stroke-linecap="round"/><polygon points="943.70,110.10 947.90,110.10 945.80,112.40" fill="#555"/><polygon points="978.70,110.10 982.90,110.10 980.80,112.40" fill="#555"/><polyline points="1010.5,129.5 1014.3,126 1018,129.5" fill="none" stroke="#777" stroke-width="0.9"/><polygon points="70.5,152.3 75,152.3 72.75,155" fill="#555"/><circle cx="91.3" cy="149.5" r="0.6" fill="#999"/><circle cx="91.3" cy="154" r="0.6" fill="#999"/><circle cx="91.3" cy="158.5" r="0.6" fill="#999"/><path d="M113.5 150.5 L119.5 157 M119.5 150.5 L113.5 157" stroke="#c8c8c8" stroke-width="1"/><polyline points="140.5,154 143.5,157 148.5,150.5" fill="none" stroke="#c8c8c8" stroke-width="1.2"/><polyline points="1011.5,152.7 1014,155 1016.5,152.7" fill="none" stroke="#666" stroke-width="1.2"/><polygon points="15,177.7 15,183.3 9.5,183.3" fill="#b5b5b5"/></svg>
</body></html>
